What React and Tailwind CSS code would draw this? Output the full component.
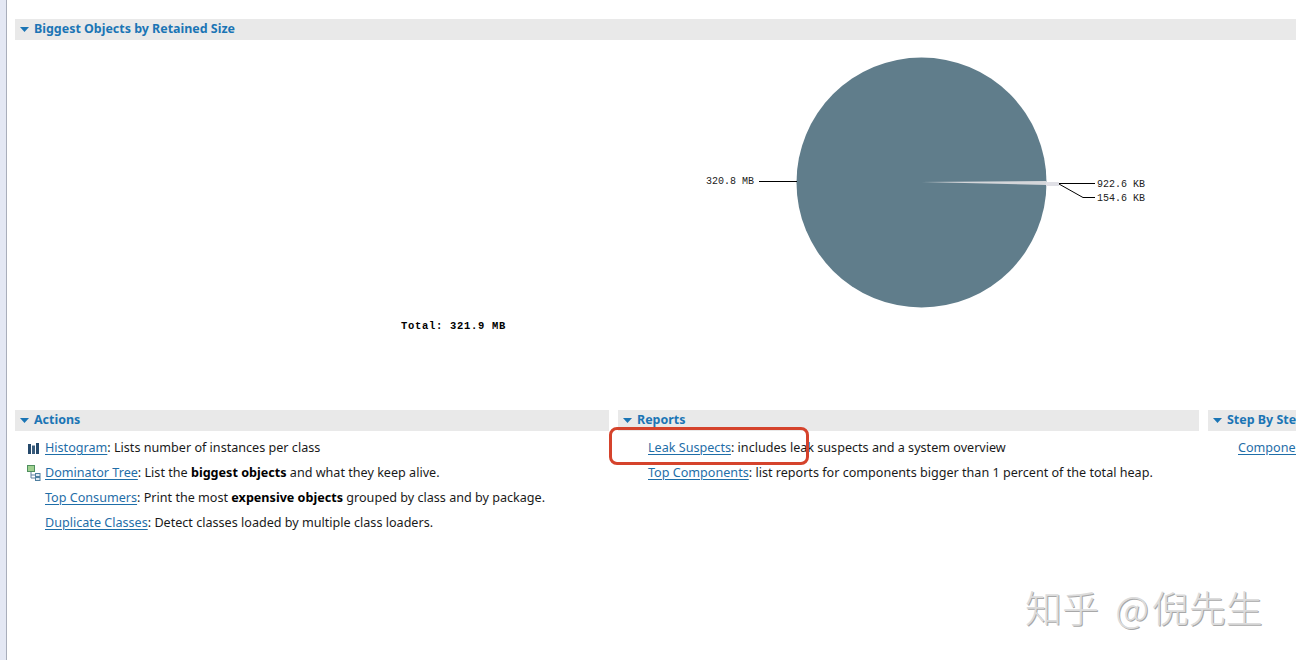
const font = "font-['Noto_Sans','Open_Sans',sans-serif]";

function Caret() {
  return <svg width="9" height="5" viewBox="0 0 9 5" className="shrink-0"><path d="M0 0H9L4.5 5Z" fill="#1b75b5" /></svg>;
}

function Header({ title, className = "" }) {
  return (
    <div className={`h-[21px] bg-[#e9e9e9] flex items-center pl-[5px] gap-[5px] overflow-hidden whitespace-nowrap ${className}`}>
      <Caret />
      <span className="text-[12.45px] font-bold text-[#1b75b5] leading-none">{title}</span>
    </div>
  );
}

function L({ children }) {
  return <a className="text-[#1f6ea8] underline underline-offset-2 decoration-1">{children}</a>;
}

function Row({ icon, children }) {
  return (
    <div className="h-[25px] flex items-center whitespace-nowrap text-[12.6px] text-[#1a1a1a]">
      <span className="w-[30px] shrink-0 flex justify-end pr-[4px]">{icon}</span>
      <span>{children}</span>
    </div>
  );
}

function HistIcon() {
  return (
    <svg width="11" height="11" viewBox="0 0 11 11" className="-translate-x-[2px]">
      <rect x="0" y="1" width="3" height="10" fill="#25496b" />
      <rect x="4" y="2.5" width="3" height="8.5" fill="#3a5c7c" />
      <rect x="8" y="0" width="3" height="11" fill="#25496b" />
    </svg>
  );
}

function TreeIcon() {
  return (
    <svg width="14" height="16" viewBox="0 0 14 16" className="-translate-y-[1px]">
      <rect x="0.5" y="0.5" width="7" height="6" fill="#9fd08f" stroke="#4f8f5f" />
      <path d="M4 7V13H8M4 10H8" fill="none" stroke="#5f7f9f" />
      <rect x="8.5" y="8.5" width="4.5" height="3" fill="#dfe9f3" stroke="#4f7fa0" />
      <rect x="8.5" y="12.5" width="4.5" height="3" fill="#dfe9f3" stroke="#4f7fa0" />
    </svg>
  );
}

function Chart() {
  const mono = { fontFamily: "'Liberation Mono', monospace" };
  return (
    <svg width="1281" height="370" viewBox="15 40 1281 370" className="block">
      <circle cx="921.5" cy="182.5" r="125" fill="#607d8b" />
      <path d="M921.5 182 L1046.5 181 L1046.5 185 Z" fill="#d4d6da" />
      <rect x="1046" y="182" width="13" height="4" fill="#e0e0e6" />
      <path d="M759 181.5H797" stroke="#000" strokeWidth="1" />
      <path d="M1059 183.5H1095" stroke="#000" strokeWidth="1" fill="none" />
      <path d="M1059 184L1083 197.5H1095" stroke="#000" strokeWidth="1" fill="none" />
      <text x="706" y="184" fontSize="10" fill="#222" style={mono}>320.8 MB</text>
      <text x="1097" y="187" fontSize="10" fill="#222" style={mono}>922.6 KB</text>
      <text x="1097" y="201" fontSize="10" fill="#222" style={mono}>154.6 KB</text>
      <text x="401" y="329" fontSize="10.5" letterSpacing="0.7" fontWeight="700" fill="#000" style={mono}>Total: 321.9 MB</text>
    </svg>
  );
}

export default function App() {
  return (
    <div className={`relative w-[1296px] h-[660px] overflow-hidden bg-white flex ${font}`}>
      <div className="w-[7px] shrink-0 bg-[#e4e8f4] border-r border-[#a9aebb]" />
      <div className="flex-1 min-w-0 pl-[8px] pt-[19px]">
        <Header title="Biggest Objects by Retained Size" />
        <Chart />
        <div className="flex gap-[9px]">
          <div className="w-[594px] shrink-0">
            <Header title="Actions" className="mb-[5px]" />
            <Row icon={<HistIcon />}><L>Histogram</L>: Lists number of instances per class</Row>
            <Row icon={<TreeIcon />}><L>Dominator Tree</L>: List the <b className="font-bold text-black">biggest objects</b> and what they keep alive.</Row>
            <Row><L>Top Consumers</L>: Print the most <b className="font-bold text-black">expensive objects</b> grouped by class and by package.</Row>
            <Row><L>Duplicate Classes</L>: Detect classes loaded by multiple class loaders.</Row>
          </div>
          <div className="w-[581px] shrink-0">
            <Header title="Reports" className="mb-[5px]" />
            <Row><L>Leak Suspects</L>: includes leak suspects and a system overview</Row>
            <Row><L>Top Components</L>: list reports for components bigger than 1 percent of the total heap.</Row>
          </div>
          <div className="w-[200px] shrink-0">
            <Header title="Step By Step" className="mb-[5px]" />
            <Row><L>Component Report</L></Row>
          </div>
        </div>
      </div>
      <div className="absolute left-[609px] top-[427px] w-[200px] h-[38px] rounded-[8px] border-[3px] border-[#d5432c]" />
      <div className="absolute left-[1025px] top-[585px] whitespace-nowrap text-[37px] leading-[44px] font-light text-[#dcdcdc] [text-shadow:1px_1px_0_#a8a8a8] [word-spacing:8px] font-['Noto_Sans_CJK_SC',sans-serif]">知乎 <span className="mr-[3px]">@</span>倪先生</div>
    </div>
  );
}
